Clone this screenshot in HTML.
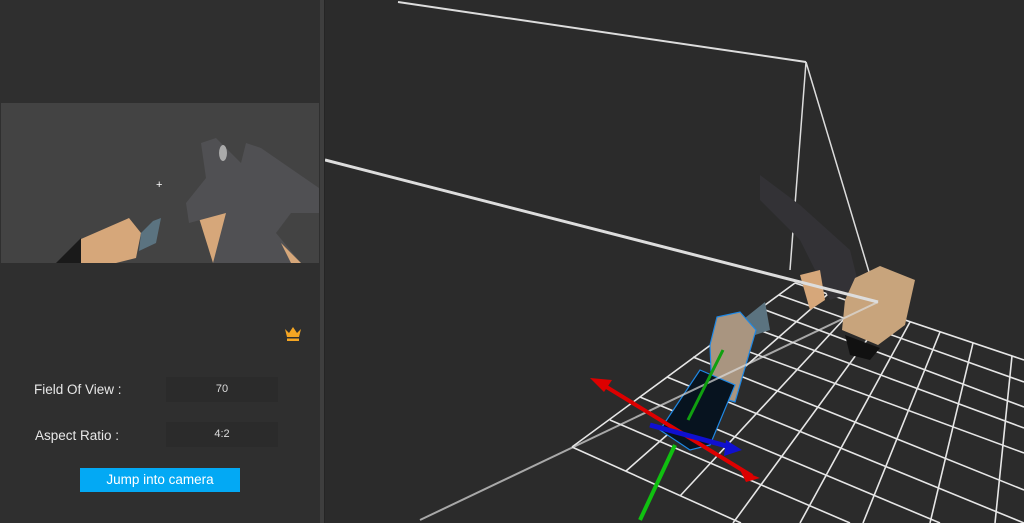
<!DOCTYPE html>
<html><head><meta charset="utf-8"><style>
body{margin:0;width:1024px;height:523px;overflow:hidden;background:#2b2b2b;font-family:"Liberation Sans",sans-serif;position:relative}
#panel{position:absolute;left:0;top:0;width:320px;height:523px;background:#2f2f2f}
#div{position:absolute;left:320px;top:0;width:4px;height:523px;background:#3e3e3e;border-right:1px solid #252525}
#prev{position:absolute;left:1px;top:103px;width:318px;height:160px;background:#434343;overflow:hidden}
.lbl{position:absolute;color:#e8e8e8;font-size:13.5px}
.inp{position:absolute;left:166px;width:112px;height:25px;background:#2b2b2b;color:#ddd;font-size:11px;text-align:center;line-height:25px}
#btn{position:absolute;left:80px;top:468px;width:160px;height:24px;background:#03a9f4;color:#fff;font-size:13.5px;text-align:center;line-height:24px}
#vp{position:absolute;left:325px;top:0}
</style></head><body>
<div id="panel">
<div id="prev"><svg width="318" height="160">
<text x="155" y="85" fill="#fff" font-size="11">+</text>
<polygon points="55,160 80,135 80,160" fill="#1a1a1a"/>
<polygon points="80,136 128,115 140,130 135,155 115,160 80,160" fill="#d6a77a"/>
<polygon points="140,130 152,118 160,115 155,140 138,148" fill="#5b7380"/>
<polygon points="198,115 225,100 230,160 212,160" fill="#d6a77a"/>
<polygon points="200,40 215,35 240,60 245,40 260,45 318,85 318,110 290,110 275,130 300,160 212,160 225,110 188,120 185,100 205,75" fill="#505053"/>
<polygon points="280,140 300,160 290,160" fill="#d6a77a"/>
<ellipse cx="222" cy="50" rx="4" ry="8" fill="#aaa"/>
</svg></div>
<svg style="position:absolute;left:284px;top:326px" width="18" height="16"><polygon points="1,3 5,7 9,1 13,7 17,3 15,11 3,11" fill="#f5a623"/><rect x="3" y="12.5" width="12" height="2.5" fill="#f5a623"/></svg>
<div class="lbl" style="left:34px;top:382px">Field Of View :</div>
<div class="inp" style="top:377px">70</div>
<div class="lbl" style="left:35px;top:428px">Aspect Ratio :</div>
<div class="inp" style="top:422px">4:2</div>
<div id="btn">Jump into camera</div>
</div>
<div id="div"></div>
<svg id="vp" width="699" height="523"><g transform="translate(-325,0)" id="g">
<g stroke="#e6e6e6" stroke-width="1.6" fill="none">
<!-- family B -->
<line x1="795" y1="283" x2="1024" y2="360"/>
<line x1="779" y1="295" x2="1024" y2="382"/>
<line x1="760" y1="308" x2="1024" y2="407"/>
<line x1="740" y1="323" x2="1024" y2="428"/>
<line x1="717" y1="340" x2="1024" y2="453"/>
<line x1="693" y1="357" x2="1024" y2="490"/>
<line x1="667" y1="377" x2="1024" y2="523"/>
<line x1="640" y1="397" x2="940" y2="523"/>
<line x1="610" y1="420" x2="850" y2="523"/>
<line x1="572" y1="447" x2="741" y2="523"/>
<!-- family A -->
<line x1="572" y1="447" x2="795" y2="283"/>
<line x1="626" y1="471" x2="828" y2="294"/>
<line x1="680" y1="496" x2="858" y2="304"/>
<line x1="733" y1="523" x2="886" y2="314"/>
<line x1="800" y1="523" x2="910" y2="322"/>
<line x1="863" y1="523" x2="940" y2="332"/>
<line x1="930" y1="523" x2="973" y2="343"/>
<line x1="995" y1="523" x2="1012" y2="356"/>
</g>
<line x1="398" y1="2" x2="806" y2="62" stroke="#ddd" stroke-width="2"/>
<line x1="806" y1="62" x2="878" y2="302" stroke="#ddd" stroke-width="1.5"/>
<line x1="806" y1="62" x2="790" y2="270" stroke="#ddd" stroke-width="1.5"/>
<polygon points="760,175 800,205 850,250 860,290 830,300 800,240 760,200" fill="#333236"/>
<polygon points="800,275 820,270 825,300 810,310" fill="#d6a77a"/>
<polygon points="855,278 880,266 915,280 905,325 878,345 842,330 845,300" fill="#c8a47c"/>
<polygon points="845,335 880,348 870,360 850,355" fill="#111"/>
<polygon points="745,318 765,302 770,330 755,335" fill="#5b7380"/>
<polygon points="717,317 740,312 756,330 735,402 712,395 710,345" fill="#a99580" stroke="#1e88e5" stroke-width="1.2"/>
<polygon points="700,370 735,385 710,445 690,450 660,430" fill="#07131f" stroke="#1e88e5" stroke-width="1.2"/>
<line x1="325" y1="160" x2="878" y2="302" stroke="#ddd" stroke-width="3"/>
<line x1="420" y1="520" x2="878" y2="302" stroke="#ddd" stroke-width="2" opacity=".7"/>
<line x1="600" y1="383" x2="752" y2="476" stroke="#d00" stroke-width="4"/>
<polygon points="590,378 612,380 604,392" fill="#d00"/><polygon points="760,478 740,470 746,482" fill="#d00"/>
<line x1="650" y1="425" x2="730" y2="447" stroke="#1010d0" stroke-width="5"/>
<polygon points="742,450 726,440 724,456" fill="#1010d0"/>
<line x1="640" y1="520" x2="675" y2="445" stroke="#10c010" stroke-width="4"/>
<line x1="688" y1="420" x2="723" y2="350" stroke="#10a010" stroke-width="3"/>
</g></svg>
</body></html>
